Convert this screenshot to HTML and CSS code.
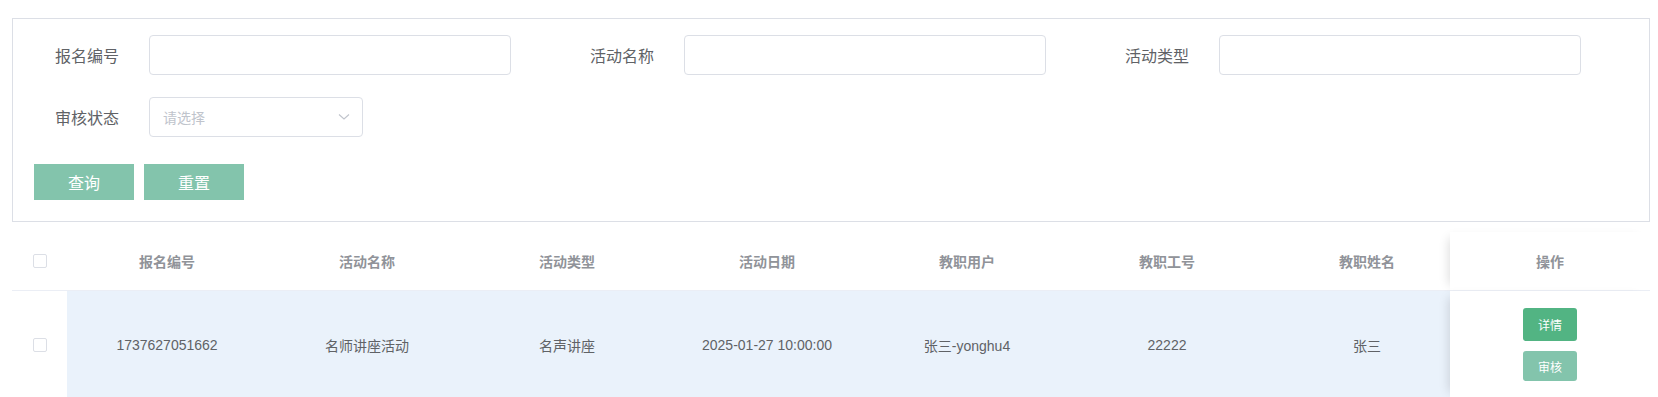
FILE: index.html
```html
<!DOCTYPE html>
<html lang="zh-CN">
<head>
  <meta charset="UTF-8" />
  <meta name="viewport" content="width=device-width, initial-scale=1.0"/>
  <title>活动报名审核</title>
  <link rel="stylesheet" href="styles.css">
</head>
<body>
  <div class="page">
    <form class="search-box">
      <div class="form-row">
        <div class="form-item">
          <label>报名编号</label>
          <input type="text" class="text-input">
        </div>
        <div class="form-item">
          <label>活动名称</label>
          <input type="text" class="text-input">
        </div>
        <div class="form-item">
          <label>活动类型</label>
          <input type="text" class="text-input">
        </div>
      </div>
      <div class="form-row">
        <div class="form-item">
          <label>审核状态</label>
          <div class="select">
            <span class="placeholder">请选择</span>
            <svg class="arrow" width="12" height="8" viewBox="0 0 12 8">
              <polyline points="1,1.5 6,6 11,1.5" fill="none" stroke="#c0c4cc" stroke-width="1.1"/>
            </svg>
          </div>
        </div>
      </div>
      <div class="btn-row">
        <button type="button" class="btn">查询</button>
        <button type="button" class="btn">重置</button>
      </div>
    </form>

    <div class="table">
      <div class="cell head check-cell"><span class="checkbox"></span></div>
      <div class="cell head">报名编号</div>
      <div class="cell head">活动名称</div>
      <div class="cell head">活动类型</div>
      <div class="cell head">活动日期</div>
      <div class="cell head">教职用户</div>
      <div class="cell head">教职工号</div>
      <div class="cell head last-col">教职姓名</div>
      <div class="cell head op-cell">操作</div>

      <div class="cell check-cell"><span class="checkbox"></span></div>
      <div class="cell hl">1737627051662</div>
      <div class="cell hl">名师讲座活动</div>
      <div class="cell hl">名声讲座</div>
      <div class="cell hl">2025-01-27 10:00:00</div>
      <div class="cell hl">张三-yonghu4</div>
      <div class="cell hl">22222</div>
      <div class="cell hl last-col">张三</div>
      <div class="cell op-cell">
        <div class="op-btns">
          <button type="button" class="op-btn detail">详情</button>
          <button type="button" class="op-btn audit">审核</button>
        </div>
      </div>
    </div>
  </div>
</body>
</html>
```

FILE: styles.css
```css
body {
  margin: 0;
  font-family: "Liberation Sans", "Noto Sans CJK SC", sans-serif;
  background: #fff;
  color: #606266;
}
.page {
  padding: 18px 8px 0 12px;
}
.search-box {
  border: 1px solid #dcdfe6;
  padding: 16px 20px 21px 21px;
  margin: 0;
}
.form-row {
  display: flex;
  padding-left: 20px;
  margin-bottom: 22px;
}
.form-row + .form-row {
  margin-bottom: 27px;
}
.form-item {
  display: flex;
  align-items: center;
  margin-right: 78px;
}
.form-item label {
  width: 95px;
  box-sizing: border-box;
  padding-right: 30px;
  text-align: right;
  font-size: 16px;
  color: #606266;
}
.text-input {
  width: 362px;
  height: 40px;
  box-sizing: border-box;
  border: 1px solid #dcdfe6;
  border-radius: 4px;
  outline: none;
  padding: 0 15px;
  font-size: 14px;
}
.select {
  width: 214px;
  height: 40px;
  box-sizing: border-box;
  border: 1px solid #dcdfe6;
  border-radius: 4px;
  display: flex;
  align-items: center;
  justify-content: space-between;
  padding: 0 12px 0 13px;
}
.placeholder {
  font-size: 14px;
  color: #c0c4cc;
}
.arrow {
  display: block;
}
.btn-row {
  display: flex;
  gap: 10px;
}
.btn {
  width: 100px;
  height: 36px;
  border: none;
  background: #83c4ac;
  color: #fff;
  font-family: inherit;
  font-size: 16px;
  padding: 0;
  cursor: pointer;
}
.table {
  margin-top: 10px;
  display: grid;
  grid-template-columns: 55px repeat(6, 200px) 183px 200px;
  font-size: 14px;
}
.cell {
  display: flex;
  align-items: center;
  justify-content: center;
  border-bottom: 1px solid #ebeef5;
  color: #606266;
  white-space: nowrap;
}
.head {
  height: 58px;
  font-weight: bold;
  color: #909399;
  background: #fff;
}
.hl {
  background: #eaf2fb;
  border-bottom: none;
}
.last-col {
  margin-right: -17px;
}
.check-cell {
  background: #fff;
}
.cell.check-cell:not(.head) {
  border-bottom: none;
}
.checkbox {
  width: 14px;
  height: 14px;
  box-sizing: border-box;
  border: 1px solid #dcdfe6;
  border-radius: 2px;
  background: #fff;
}
.op-cell {
  position: relative;
  z-index: 1;
  background: #fff;
  box-shadow: -7px 0 10px -6px rgba(0, 0, 0, 0.14);
}
.cell.op-cell:not(.head) {
  border-bottom: none;
  padding: 17px 0 17px;
}
.op-btns {
  display: flex;
  flex-direction: column;
  gap: 10px;
}
.op-btn {
  width: 54px;
  border: none;
  border-radius: 3px;
  color: #fff;
  font-family: inherit;
  font-size: 12px;
  padding: 0;
  cursor: pointer;
}
.op-btn.detail {
  height: 33px;
  background: #52b483;
}
.op-btn.audit {
  height: 30px;
  background: #83c4ac;
}
```
